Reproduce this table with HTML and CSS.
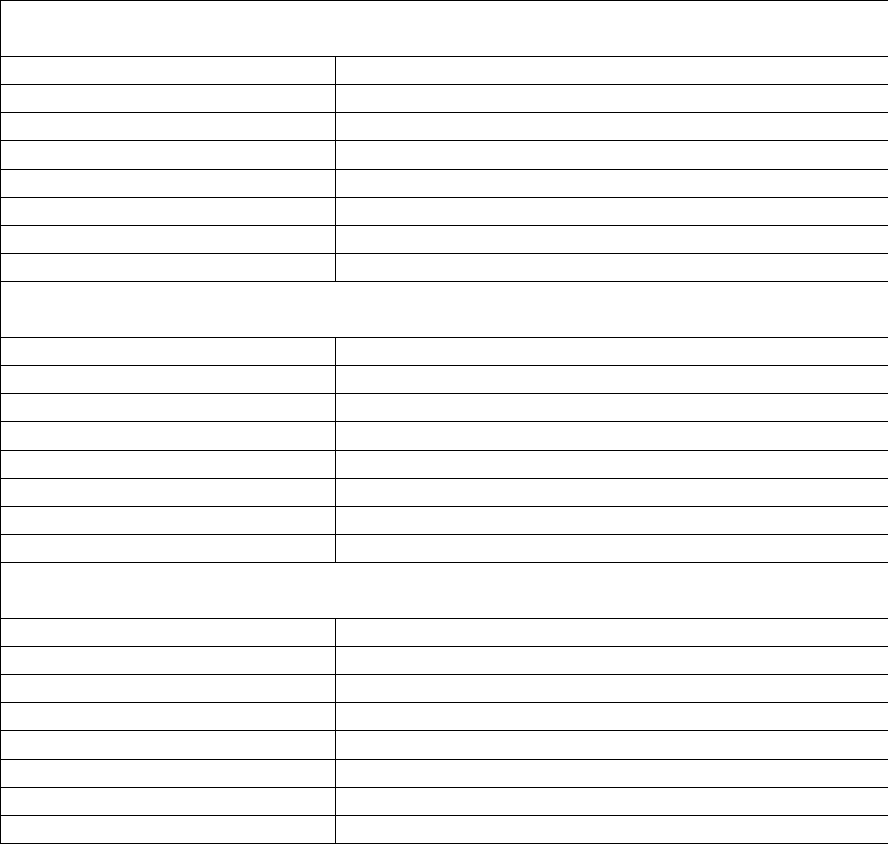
FILE: index.html
```html
<!DOCTYPE html>
<html>
<head>
<meta charset="utf-8">
<link rel="stylesheet" href="styles.css">
</head>
<body>
<table class="sheet">
  <colgroup><col class="c1"><col class="c2"></colgroup>
  <tbody>
    <tr class="head"><td colspan="2"></td></tr>
    <tr class="row"><td></td><td></td></tr>
    <tr class="row"><td></td><td></td></tr>
    <tr class="row"><td></td><td></td></tr>
    <tr class="row"><td></td><td></td></tr>
    <tr class="row"><td></td><td></td></tr>
    <tr class="row"><td></td><td></td></tr>
    <tr class="row"><td></td><td></td></tr>
    <tr class="row"><td></td><td></td></tr>
    <tr class="head"><td colspan="2"></td></tr>
    <tr class="row"><td></td><td></td></tr>
    <tr class="row"><td></td><td></td></tr>
    <tr class="row"><td></td><td></td></tr>
    <tr class="row"><td></td><td></td></tr>
    <tr class="row"><td></td><td></td></tr>
    <tr class="row"><td></td><td></td></tr>
    <tr class="row"><td></td><td></td></tr>
    <tr class="row"><td></td><td></td></tr>
    <tr class="head"><td colspan="2"></td></tr>
    <tr class="row"><td></td><td></td></tr>
    <tr class="row"><td></td><td></td></tr>
    <tr class="row"><td></td><td></td></tr>
    <tr class="row"><td></td><td></td></tr>
    <tr class="row"><td></td><td></td></tr>
    <tr class="row"><td></td><td></td></tr>
    <tr class="row"><td></td><td></td></tr>
    <tr class="row"><td></td><td></td></tr>
  </tbody>
</table>
</body>
</html>
```

FILE: styles.css
```css
html, body {
  margin: 0;
  padding: 0;
  background: #ffffff;
  font-family: "Liberation Serif", "Times New Roman", serif;
  font-size: 12px;
}
.sheet {
  border-collapse: collapse;
  table-layout: fixed;
  width: 888px;
}
.c1 { width: 335px; }
.c2 { width: 553px; }
.sheet td {
  border: 1px solid #000000;
  padding: 0;
}
.head { height: 56.2px; }
.row { height: 28.1px; }
```
